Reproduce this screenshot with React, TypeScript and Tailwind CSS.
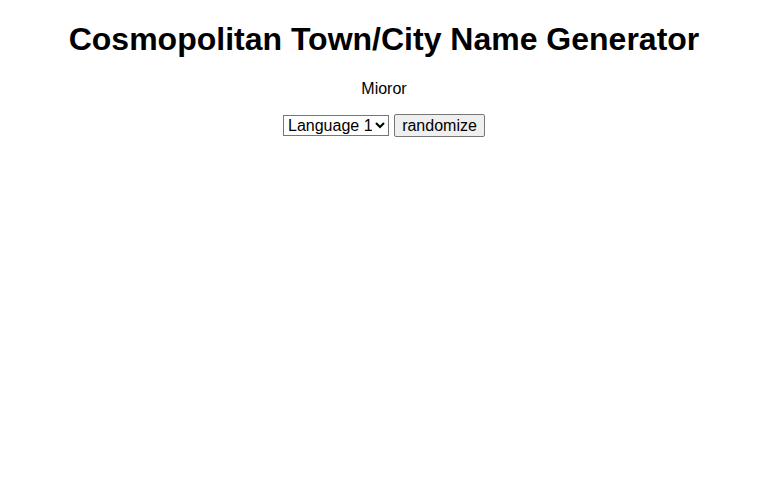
import { useState } from "react";

const names = ["Mioror", "Vaselin", "Ortamund", "Kessaria", "Lundabor"];

export default function App() {
  const [name, setName] = useState(names[0]);
  const [lang, setLang] = useState("1");

  return (
    <div className="min-h-screen bg-white text-black text-center font-['Liberation_Sans',Arial,sans-serif] text-base">
      <h1 className="text-[32px] font-bold leading-[37px] pt-[21px] mb-[22px]">Cosmopolitan Town/City Name Generator</h1>
      <p className="leading-[18px]">{name}</p>
      <div className="mt-4 flex justify-center items-center gap-[5px]">
        <select
          value={lang}
          onChange={(e) => setLang(e.target.value)}
          className="h-[21px] w-[106px] border border-[#767676] bg-white text-base leading-[18px] p-0"
        >
          <option value="1">Language 1</option>
          <option value="2">Language 2</option>
          <option value="3">Language 3</option>
        </select>
        <button
          onClick={() => setName(names[Math.floor(Math.random() * names.length)])}
          className="h-[23px] w-[91px] border border-[#767676] rounded-[2px] bg-[#efefef] text-base leading-[18px]"
        >
          randomize
        </button>
      </div>
    </div>
  );
}
